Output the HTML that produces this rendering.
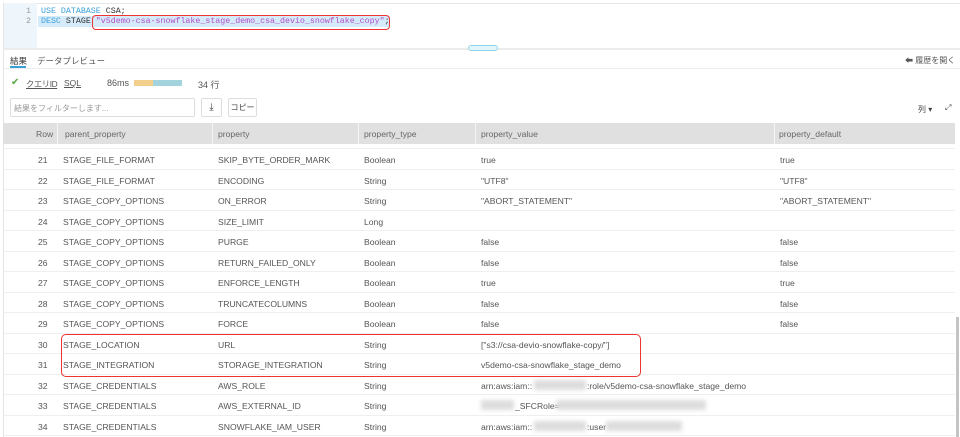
<!DOCTYPE html>
<html><head><meta charset="utf-8"><style>
*{margin:0;padding:0;box-sizing:border-box}
body{width:960px;height:437px;overflow:hidden;background:#fff;font-family:"Liberation Sans","Noto Sans CJK JP",sans-serif;color:#555;position:relative}
.a{position:absolute;white-space:nowrap}
.mono{font-family:"Liberation Mono",monospace;font-size:8.3px}
.r{position:absolute;left:3px;width:952px;height:20.5px;border-bottom:1px solid #efefef;font-size:8.6px;color:#555}
.r span{position:absolute;top:6px;white-space:nowrap}
.h span{position:absolute;top:6px;font-size:8.6px;color:#666}
.blur{position:absolute;top:5px;height:10px;background:#ddd;filter:blur(2px)}
</style></head><body>
<div class="a" style="left:3px;top:3px;width:957px;border-top:1px solid #e6e6e6"></div>
<div class="a" style="left:3px;top:3px;width:34px;height:45px;background:#eef6fc"></div>
<div class="a" style="left:3px;top:3px;width:1px;height:434px;background:#e4e4e4"></div>
<div class="a mono" style="left:26px;top:7px;color:#999">1</div>
<div class="a mono" style="left:26px;top:17px;color:#999">2</div>
<div class="a mono" style="left:41px;top:7px;color:#3aa0d8">USE DATABASE <span style="color:#333">CSA;</span></div>
<div class="a" style="left:38px;top:16px;width:352px;height:11px;background:#d5ebfa"></div>
<div class="a mono" style="left:41px;top:17px;color:#3aa0d8">DESC <span style="color:#333">STAGE</span> <span style="color:#b24fc9">"v5demo-csa-snowflake_stage_demo_csa_devio_snowflake_copy"</span><span style="color:#333">;</span></div>
<div class="a" style="left:92px;top:15px;width:298px;height:15px;border:1.5px solid #e33;border-radius:4px"></div>
<div class="a" style="left:3px;top:48px;width:957px;height:2px;background:#ececec"></div>
<div class="a" style="left:468px;top:45px;width:30px;height:6px;border:1px solid #8fd4ec;background:#e3f6fc;border-radius:3px"></div>
<div class="a" style="left:10px;top:55px;font-size:8.5px;color:#333">結果</div>
<div class="a" style="left:10px;top:66px;width:16px;height:2px;background:#3aa0d8"></div>
<div class="a" style="left:37px;top:55px;font-size:8.5px;color:#555">データプレビュー</div>
<div class="a" style="left:905px;top:55px;font-size:8px;color:#555">⬅ 履歴を開く</div>
<div class="a" style="left:3px;top:68px;width:957px;height:1px;background:#ececec"></div>
<div class="a" style="left:11px;top:77px;font-size:10px;color:#5aa846">✔</div>
<div class="a" style="left:26px;top:78px;font-size:8.3px;color:#555;text-decoration:underline;letter-spacing:-0.4px">クエリID</div>
<div class="a" style="left:64px;top:78px;font-size:8.5px;color:#555;text-decoration:underline">SQL</div>
<div class="a" style="left:107px;top:78px;font-size:9px;color:#555">86ms</div>
<div class="a" style="left:134px;top:80px;width:19px;height:6px;background:#f3cf8e"></div>
<div class="a" style="left:153px;top:80px;width:29px;height:6px;background:#a3d3dc"></div>
<div class="a" style="left:198px;top:78px;font-size:9px;color:#555">34 行</div>
<div class="a" style="left:10px;top:98px;width:185px;height:19px;border:1px solid #ddd;border-radius:2px"></div>
<div class="a" style="left:14px;top:103px;font-size:8px;color:#999">結果をフィルターします...</div>
<div class="a" style="left:201px;top:98px;width:21px;height:19px;border:1px solid #ddd;border-radius:2px;font-size:10px;text-align:center;line-height:17px;color:#444">⤓</div>
<div class="a" style="left:228px;top:98px;width:29px;height:19px;border:1px solid #ddd;border-radius:2px;font-size:8px;text-align:center;line-height:17px;color:#444">コピー</div>
<div class="a" style="left:918px;top:104px;font-size:8px;color:#444">列 ▾</div>
<div class="a" style="left:945px;top:103px;font-size:8px;color:#444">⤢</div>
<div class="a h" style="left:3px;top:123px;width:952px;height:21px;background:#e0e0e0">
<span style="left:33px">Row</span><span style="left:62px">parent_property</span><span style="left:215px">property</span><span style="left:361px">property_type</span><span style="left:478px">property_value</span><span style="left:776px">property_default</span>
<div style="position:absolute;left:54px;top:0;width:1px;height:21px;background:#f4f4f4"></div>
<div style="position:absolute;left:209px;top:0;width:1px;height:21px;background:#f4f4f4"></div>
<div style="position:absolute;left:355px;top:0;width:1px;height:21px;background:#f4f4f4"></div>
<div style="position:absolute;left:472px;top:0;width:1px;height:21px;background:#f4f4f4"></div>
<div style="position:absolute;left:771px;top:0;width:1px;height:21px;background:#f4f4f4"></div>
</div>
<div class="a" style="left:3px;top:144px;width:952px;height:5px;border-bottom:1px solid #efefef"></div>

<div class="r" style="top:149px"><span style="left:35px">21</span><span style="left:60px">STAGE_FILE_FORMAT</span><span style="left:215px">SKIP_BYTE_ORDER_MARK</span><span style="left:361px">Boolean</span><span style="left:478px">true</span><span style="left:777px">true</span></div>
<div class="r" style="top:169.5px"><span style="left:35px">22</span><span style="left:60px">STAGE_FILE_FORMAT</span><span style="left:215px">ENCODING</span><span style="left:361px">String</span><span style="left:478px">"UTF8"</span><span style="left:777px">"UTF8"</span></div>
<div class="r" style="top:190px"><span style="left:35px">23</span><span style="left:60px">STAGE_COPY_OPTIONS</span><span style="left:215px">ON_ERROR</span><span style="left:361px">String</span><span style="left:478px">"ABORT_STATEMENT"</span><span style="left:777px">"ABORT_STATEMENT"</span></div>
<div class="r" style="top:210.5px"><span style="left:35px">24</span><span style="left:60px">STAGE_COPY_OPTIONS</span><span style="left:215px">SIZE_LIMIT</span><span style="left:361px">Long</span></div>
<div class="r" style="top:231px"><span style="left:35px">25</span><span style="left:60px">STAGE_COPY_OPTIONS</span><span style="left:215px">PURGE</span><span style="left:361px">Boolean</span><span style="left:478px">false</span><span style="left:777px">false</span></div>
<div class="r" style="top:251.5px"><span style="left:35px">26</span><span style="left:60px">STAGE_COPY_OPTIONS</span><span style="left:215px">RETURN_FAILED_ONLY</span><span style="left:361px">Boolean</span><span style="left:478px">false</span><span style="left:777px">false</span></div>
<div class="r" style="top:272px"><span style="left:35px">27</span><span style="left:60px">STAGE_COPY_OPTIONS</span><span style="left:215px">ENFORCE_LENGTH</span><span style="left:361px">Boolean</span><span style="left:478px">true</span><span style="left:777px">true</span></div>
<div class="r" style="top:292.5px"><span style="left:35px">28</span><span style="left:60px">STAGE_COPY_OPTIONS</span><span style="left:215px">TRUNCATECOLUMNS</span><span style="left:361px">Boolean</span><span style="left:478px">false</span><span style="left:777px">false</span></div>
<div class="r" style="top:313px"><span style="left:35px">29</span><span style="left:60px">STAGE_COPY_OPTIONS</span><span style="left:215px">FORCE</span><span style="left:361px">Boolean</span><span style="left:478px">false</span><span style="left:777px">false</span></div>
<div class="r" style="top:333.5px"><span style="left:35px">30</span><span style="left:60px">STAGE_LOCATION</span><span style="left:215px">URL</span><span style="left:361px">String</span><span style="left:478px">["s3://csa-devio-snowflake-copy/"]</span></div>
<div class="r" style="top:354px"><span style="left:35px">31</span><span style="left:60px">STAGE_INTEGRATION</span><span style="left:215px">STORAGE_INTEGRATION</span><span style="left:361px">String</span><span style="left:478px">v5demo-csa-snowflake_stage_demo</span></div>
<div class="r" style="top:374.5px"><span style="left:35px">32</span><span style="left:60px">STAGE_CREDENTIALS</span><span style="left:215px">AWS_ROLE</span><span style="left:361px">String</span><span style="left:478px">arn:aws:iam::</span><div class="blur" style="left:531px;width:52px"></div><span style="left:584px">:role/v5demo-csa-snowflake_stage_demo</span></div>
<div class="r" style="top:395px"><span style="left:35px">33</span><span style="left:60px">STAGE_CREDENTIALS</span><span style="left:215px">AWS_EXTERNAL_ID</span><span style="left:361px">String</span><div class="blur" style="left:478px;width:33px"></div><span style="left:512px">_SFCRole=</span><div class="blur" style="left:553px;width:150px"></div></div>
<div class="r" style="top:415.5px"><span style="left:35px">34</span><span style="left:60px">STAGE_CREDENTIALS</span><span style="left:215px">SNOWFLAKE_IAM_USER</span><span style="left:361px">String</span><span style="left:478px">arn:aws:iam::</span><div class="blur" style="left:531px;width:52px"></div><span style="left:584px">:user</span><div class="blur" style="left:603px;width:76px"></div></div>

<div class="a" style="left:61px;top:334px;width:580px;height:43px;border:1.5px solid #e33;border-radius:5px"></div>
<div class="a" style="left:956px;top:317px;width:3px;height:120px;background:#c4c4c4"></div>
</body></html>
